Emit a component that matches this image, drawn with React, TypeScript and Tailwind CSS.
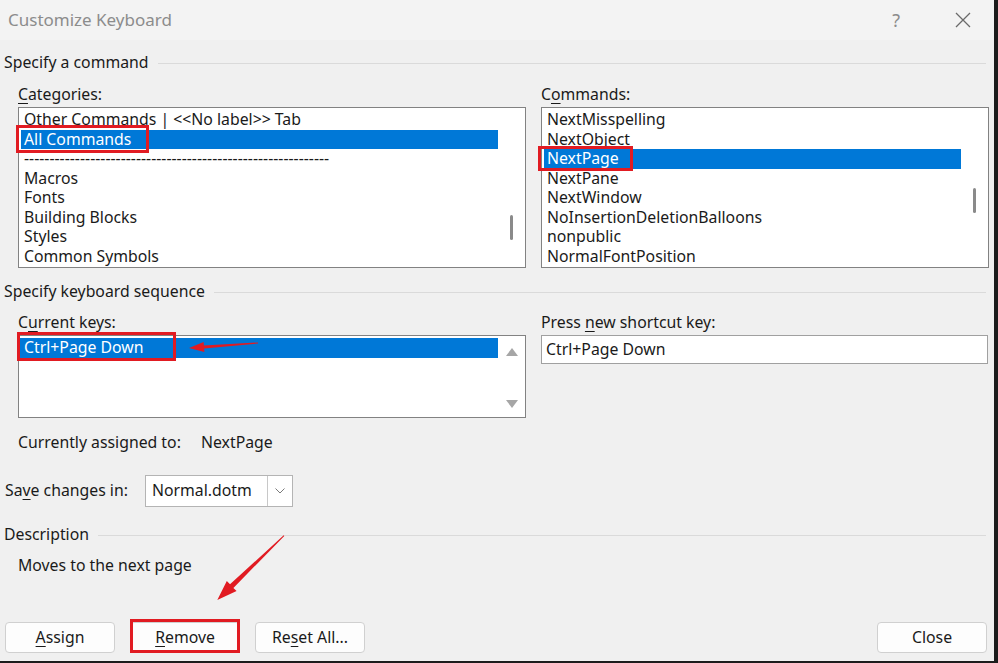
import React from "react";

const categories = [
  "Other Commands | <<No label>> Tab",
  "All Commands",
  "------------------------------------------------------------",
  "Macros",
  "Fonts",
  "Building Blocks",
  "Styles",
  "Common Symbols",
];

const commands = [
  "NextMisspelling",
  "NextObject",
  "NextPage",
  "NextPane",
  "NextWindow",
  "NoInsertionDeletionBalloons",
  "nonpublic",
  "NormalFontPosition",
];

function U({ children }: { children: React.ReactNode }) {
  return <span className="underline underline-offset-[3px] decoration-1">{children}</span>;
}

function GroupHeader({ title, className }: { title: string; className?: string }) {
  return (
    <div className={`flex items-center h-[20px] pr-[4px] ${className ?? ""}`}>
      <span className="pr-[9px] text-[#1a1a1a]">{title}</span>
      <div className="flex-1 h-px bg-[#dadada]" />
    </div>
  );
}

function ListBox({
  items,
  selected,
  thumbTop,
}: {
  items: string[];
  selected: number;
  thumbTop: number;
}) {
  return (
    <div className="flex h-[161px] border border-[#828282] bg-white overflow-hidden">
      <div className="flex-1 pt-[2px] pl-[2px] overflow-hidden">
        {items.map((it, i) => (
          <div
            key={i}
            className={`h-[19.5px] leading-[19.5px] pl-[3px] whitespace-nowrap ${
              i === selected ? "bg-[#0078d7] text-white" : "text-[#1a1a1a]"
            }`}
          >
            {it}
          </div>
        ))}
      </div>
      <div className="w-[27px] flex justify-center">
        <div className="w-[3px] h-[25px] bg-[#8a8a8a] rounded-sm" style={{ marginTop: thumbTop }} />
      </div>
    </div>
  );
}

function Button({ label, className }: { label: React.ReactNode; className?: string }) {
  return (
    <div
      className={`relative w-[110px] h-[31px] flex items-center justify-center rounded-[4px] border border-[#d0d0d0] bg-[#fdfdfd] text-[#1a1a1a] ${className ?? ""}`}
    >
      {label}
    </div>
  );
}

export default function App() {
  return (
    <div className="w-[998px] h-[663px] bg-[#1c1c1c] font-['Noto_Sans','Liberation_Sans',sans-serif] text-[15.8px]">
      <div className="relative w-[994px] h-[661px] bg-[#f0f0f0] flex flex-col">
        {/* Title bar */}
        <div className="h-[40px] bg-[#f3f3f3] flex items-center pl-[8px] pr-[20px]">
          <span className="text-[17px] text-[#8c8c8c]">Customize Keyboard</span>
          <span className="ml-auto mr-[55px] text-[18px] text-[#8c8c8c]">?</span>
          <svg width="16" height="16" viewBox="0 0 16 16" className="mr-[3px]">
            <path d="M1 1L15 15M15 1L1 15" stroke="#6a6a6a" strokeWidth="1.3" />
          </svg>
        </div>

        <div className="flex-1 flex flex-col px-[4px]">
          <GroupHeader title="Specify a command" className="mt-[13px]" />

          <div className="flex mt-[11px] pl-[14px] gap-[15px]">
            <div className="w-[508px] flex flex-col">
              <div className="h-[20px] leading-[20px] mb-[3px] text-[#1a1a1a]">
                <U>C</U>ategories:
              </div>
              <ListBox items={categories} selected={1} thumbTop={107} />
            </div>
            <div className="w-[448px] flex flex-col">
              <div className="h-[20px] leading-[20px] mb-[3px] text-[#1a1a1a]">
                C<U>o</U>mmands:
              </div>
              <ListBox items={commands} selected={2} thumbTop={80} />
            </div>
          </div>

          <GroupHeader title="Specify keyboard sequence" className="mt-[14px]" />

          <div className="flex mt-[10px] pl-[14px] gap-[15px]">
            <div className="w-[508px] flex flex-col">
              <div className="h-[20px] leading-[20px] mb-[3px] text-[#1a1a1a]">
                C<U>u</U>rrent keys:
              </div>
              <div className="flex h-[83px] border border-[#828282] bg-white">
                <div className="flex-1 pt-[2px] pl-[1px]">
                  <div className="h-[19.5px] leading-[19.5px] pl-[4px] bg-[#0078d7] text-white">
                    Ctrl+Page Down
                  </div>
                </div>
                <div className="w-[27px] flex flex-col items-center justify-between pt-[12px] pb-[9px]">
                  <svg width="12" height="8" viewBox="0 0 12 8">
                    <path d="M6 0L12 8H0Z" fill="#a6a6a6" />
                  </svg>
                  <svg width="12" height="8" viewBox="0 0 12 8">
                    <path d="M0 0H12L6 8Z" fill="#a6a6a6" />
                  </svg>
                </div>
              </div>
            </div>
            <div className="w-[447px] flex flex-col">
              <div className="h-[20px] leading-[20px] mb-[3px] text-[#1a1a1a]">
                Press <U>n</U>ew shortcut key:
              </div>
              <div className="h-[29px] border border-[#a0a0a0] bg-white flex items-center pl-[4px] text-[#1a1a1a]">
                Ctrl+Page Down
              </div>
            </div>
          </div>

          <div className="flex mt-[14px] pl-[14px] h-[20px] leading-[20px] text-[#1a1a1a]">
            <span className="w-[183px]">Currently assigned to:</span>
            <span>NextPage</span>
          </div>

          <div className="flex items-center mt-[23px] pl-[1px]">
            <span className="w-[140px] text-[#1a1a1a]">
              Sa<U>v</U>e changes in:
            </span>
            <div className="w-[148px] h-[32px] border border-[#b4b4b4] bg-white flex">
              <div className="flex-1 flex items-center pl-[6px] text-[#1a1a1a]">Normal.dotm</div>
              <div className="w-[25px] border-l border-[#c8c8c8] flex items-center justify-center">
                <svg width="10" height="6" viewBox="0 0 10 6">
                  <path d="M0.5 0.5L5 5L9.5 0.5" fill="none" stroke="#7a7a7a" strokeWidth="1" />
                </svg>
              </div>
            </div>
          </div>

          <GroupHeader title="Description" className="mt-[18px]" />

          <div className="mt-[10px] pl-[14px] h-[20px] leading-[20px] text-[#1a1a1a]">
            Moves to the next page
          </div>

          <div className="mt-auto mb-[8px] flex gap-[15px] pl-[1px] pr-[3px]">
            <Button label={<><U>A</U>ssign</>} />
            <Button
              label={
                <>
                  <U>R</U>emove
                  <span className="absolute -top-[4px] -left-[1px] -right-[1px] -bottom-[1px] border-[3px] border-[#e11b22]" />
                </>
              }
            />
            <Button label={<>Re<U>s</U>et All...</>} />
            <Button label="Close" className="ml-auto" />
          </div>
        </div>

        {/* Annotations */}
        <div className="absolute left-[16px] top-[125px] w-[133px] h-[28px] border-[3px] border-[#e11b22]" />
        <div className="absolute left-[538px] top-[146px] w-[95px] h-[25px] border-[3px] border-[#e11b22]" />
        <div className="absolute left-[17px] top-[332px] w-[159px] h-[29px] border-[3px] border-[#e11b22]" />
        <svg className="absolute left-0 top-0 pointer-events-none" width="994" height="661">
          <polygon
            points="258,343.5 204.1,348.4 204.4,352 189,348 203.6,341.9 203.9,345.4 258,342.5"
            fill="#e11b22"
          />
          <polygon
            points="284.3,536 233.4,587.9 236.6,591.1 217.3,600 226.8,581.1 230,584.3 283.7,535.3"
            fill="#e11b22"
          />
        </svg>
      </div>
    </div>
  );
}
